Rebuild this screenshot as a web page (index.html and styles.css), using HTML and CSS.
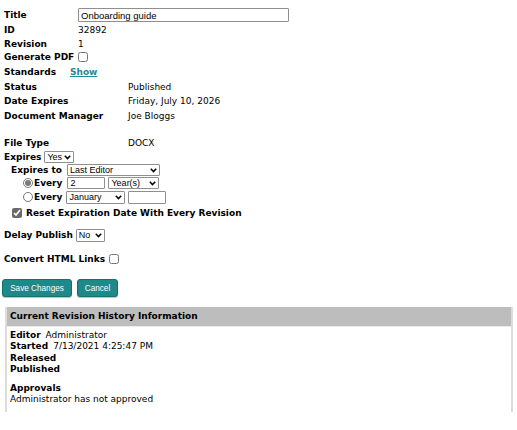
FILE: index.html
```html
<!DOCTYPE html>
<html>
<head>
<meta charset="utf-8">
<link rel="stylesheet" href="styles.css">
</head>
<body>
<form class="doc-form">
  <div class="row r-title"><span class="lbl w74">Title</span><input class="txt title-input" type="text" value="Onboarding guide"></div>
  <div class="row r-id"><span class="lbl w74">ID</span><span class="val">32892</span></div>
  <div class="row r-rev"><span class="lbl w74">Revision</span><span class="val">1</span></div>
  <div class="row r-pdf"><span class="lbl">Generate PDF</span><input class="chk" type="checkbox"></div>
  <div class="row r-std"><span class="lbl w66">Standards</span><a class="show-link" href="#">Show</a></div>
  <div class="row r-status"><span class="lbl w124">Status</span><span class="val">Published</span></div>
  <div class="row r-date"><span class="lbl w124">Date Expires</span><span class="val">Friday, July 10, 2026</span></div>
  <div class="row r-mgr"><span class="lbl w124">Document Manager</span><span class="val">Joe Bloggs</span></div>
  <div class="row r-type"><span class="lbl w124">File Type</span><span class="val">DOCX</span></div>
  <div class="row r-exp"><span class="lbl">Expires</span><span class="selwrap sw-yes"><select class="sel"><option>Yes</option></select><svg class="chev" viewBox="0 0 7 5" width="7" height="5"><polyline points="0.8,0.8 3.5,3.6 6.2,0.8" fill="none" stroke="#000" stroke-width="1.5"/></svg></span></div>
  <div class="row r-expto indent1"><span class="lbl">Expires to</span><span class="selwrap sw-editor"><select class="sel"><option>Last Editor</option></select><svg class="chev" viewBox="0 0 7 5" width="7" height="5"><polyline points="0.8,0.8 3.5,3.6 6.2,0.8" fill="none" stroke="#000" stroke-width="1.5"/></svg></span></div>
  <div class="row r-every indent2"><input class="rad" type="radio" name="ev" checked><span class="lbl">Every</span><input class="txt num" type="text" value="2"><span class="selwrap sw-unit"><select class="sel"><option>Year(s)</option></select><svg class="chev" viewBox="0 0 7 5" width="7" height="5"><polyline points="0.8,0.8 3.5,3.6 6.2,0.8" fill="none" stroke="#000" stroke-width="1.5"/></svg></span></div>
  <div class="row r-every2 indent2"><input class="rad" type="radio" name="ev"><span class="lbl">Every</span><span class="selwrap sw-month"><select class="sel"><option>January</option></select><svg class="chev" viewBox="0 0 7 5" width="7" height="5"><polyline points="0.8,0.8 3.5,3.6 6.2,0.8" fill="none" stroke="#000" stroke-width="1.5"/></svg></span><input class="txt num2" type="text" value=""></div>
  <div class="row r-reset indent0"><input class="chk chk-on" type="checkbox" checked><span class="lbl">Reset Expiration Date With Every Revision</span></div>
  <div class="row r-delay"><span class="lbl">Delay Publish</span><span class="selwrap sw-no"><select class="sel"><option>No</option></select><svg class="chev" viewBox="0 0 7 5" width="7" height="5"><polyline points="0.8,0.8 3.5,3.6 6.2,0.8" fill="none" stroke="#000" stroke-width="1.5"/></svg></span></div>
  <div class="row r-conv"><span class="lbl">Convert HTML Links</span><input class="chk" type="checkbox"></div>
  <div class="buttons"><button type="button" class="btn btn-save">Save Changes</button><button type="button" class="btn btn-cancel">Cancel</button></div>
</form>
<section class="panel">
  <div class="panel-head">Current Revision History Information</div>
  <div class="panel-body">
    <div class="line"><b>Editor</b>Administrator</div>
    <div class="line"><b>Started</b>7/13/2021 4:25:47 PM</div>
    <div class="line"><b>Released</b></div>
    <div class="line"><b>Published</b></div>
    <div class="line approvals"><b>Approvals</b></div>
    <div class="line">Administrator has not approved</div>
  </div>
</section>
</body>
</html>
```
FILE: styles.css
```css
html, body {
  margin: 0;
  padding: 0;
  background: #fff;
}
body {
  font-family: "DejaVu Sans", Verdana, sans-serif;
  font-size: 9px;
  color: #000;
  padding: 7px 4px 0 4px;
}
.doc-form {
  margin: 0;
}
.row {
  display: flex;
  align-items: center;
  white-space: nowrap;
}
.lbl {
  font-weight: bold;
}
.w74 { width: 74px; }
.w66 { width: 66px; }
.w124 { width: 124px; }
.val { font-weight: normal; }

.r-title { height: 16px; }
.r-id { height: 14px; }
.r-rev { height: 13px; }
.r-pdf { height: 14px; }
.r-std { height: 15px; }
.r-status { height: 15px; }
.r-date { height: 13px; }
.r-mgr { height: 17px; }
.r-type { height: 14px; margin-top: 12px; }
.r-exp { height: 13px; }
.r-expto { height: 13px; }
.r-every { height: 14px; }
.r-every2 { height: 14px; }
.r-reset { height: 14px; margin-top: 2px; }
.r-delay { height: 14px; margin-top: 8px; }
.r-conv { height: 14px; margin-top: 10px; }

.indent1 { padding-left: 7px; }
.indent2 { padding-left: 19px; }
.indent0 { padding-left: 8px; }

.txt {
  font-family: "Liberation Sans", Arial, sans-serif;
  font-size: 9px;
  box-sizing: border-box;
  border: 1px solid #8f8f8f;
  border-radius: 1px;
  padding: 0 2px;
  margin: 0;
  background: #fff;
  color: #000;
}
.title-input {
  width: 211px;
  height: 14px;
  font-size: 9.5px;
}
.num {
  width: 38px;
  height: 12px;
  margin-left: 5px;
}
.num2 {
  width: 38px;
  height: 13px;
  margin-left: 3px;
}

.selwrap {
  position: relative;
  display: inline-flex;
  margin-left: 3px;
}
.sel {
  -webkit-appearance: none;
  appearance: none;
  font-family: "Liberation Sans", Arial, sans-serif;
  font-size: 9px;
  box-sizing: border-box;
  width: 100%;
  height: 12px;
  line-height: 10px;
  border: 1px solid #8f8f8f;
  border-radius: 1px;
  padding: 0 10px 0 2px;
  margin: 0;
  background: #fff;
  color: #000;
}
.chev {
  position: absolute;
  right: 3px;
  top: 50%;
  margin-top: -2px;
  pointer-events: none;
}
.sw-yes { width: 30px; }
.sw-editor { width: 93px; margin-left: 5px; }
.sw-unit { width: 51px; margin-left: 3px; }
.sw-month { width: 59px; margin-left: 4px; }
.sw-month .sel { height: 13px; }
.sw-no { width: 29px; }
.sw-no .sel { height: 13px; }

.chk {
  width: 10px;
  height: 10px;
  margin: 0 0 0 4px;
  accent-color: #6b6b6b;
}
.chk-on {
  margin: 0 4px 0 0;
}
.rad {
  width: 10px;
  height: 10px;
  margin: 0 1px 0 0;
  accent-color: #7a7a7a;
}
.show-link {
  color: #1f8a8f;
  font-weight: bold;
  text-decoration: underline;
}

.buttons {
  display: flex;
  gap: 5px;
  margin-top: 13px;
  margin-left: -2px;
}
.btn {
  font-family: "Liberation Sans", Arial, sans-serif;
  font-size: 8.2px;
  color: #fff;
  background: #1f8888;
  border: 1px solid #177070;
  border-radius: 3px;
  height: 18px;
  padding: 0 8px;
  box-shadow: 0 1px 1px rgba(0,0,0,0.25);
}
.btn-save {
  width: 70px;
  padding: 0;
}
.btn-cancel {
  width: 41px;
  padding: 0;
}

.panel {
  margin: 10px 0 0 1px;
  width: 508px;
  box-sizing: border-box;
  border-left: 2px solid #dcdcdc;
  border-right: 2px solid #dcdcdc;
}
.panel-head {
  background: #bdbdbd;
  font-weight: bold;
  height: 19px;
  line-height: 19px;
  padding-left: 3px;
  border-bottom: 1px solid #eaeaea;
}
.panel-body {
  padding: 3px 3px 6px 3px;
  line-height: 11.3px;
}
.line b {
  margin-right: 5px;
}
.approvals {
  margin-top: 8px;
}
```
